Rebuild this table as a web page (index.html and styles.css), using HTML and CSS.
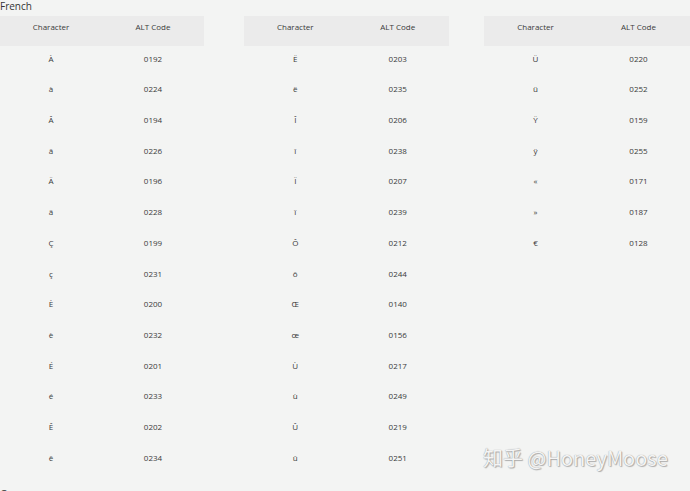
FILE: index.html
```html
<!DOCTYPE html>
<html lang="fr">
<head>
<meta charset="utf-8">
<link rel="stylesheet" href="styles.css">
</head>
<body>
<h3 class="section-title">French</h3>
<div class="tables">
  <div class="alt-table t1">
    <div class="head">Character</div><div class="head">ALT Code</div>
    <div>À</div><div>0192</div>
    <div>à</div><div>0224</div>
    <div>Â</div><div>0194</div>
    <div>â</div><div>0226</div>
    <div>Ä</div><div>0196</div>
    <div>ä</div><div>0228</div>
    <div>Ç</div><div>0199</div>
    <div>ç</div><div>0231</div>
    <div>È</div><div>0200</div>
    <div>è</div><div>0232</div>
    <div>É</div><div>0201</div>
    <div>é</div><div>0233</div>
    <div>Ê</div><div>0202</div>
    <div>ê</div><div>0234</div>
  </div>
  <div class="alt-table t2">
    <div class="head">Character</div><div class="head">ALT Code</div>
    <div>Ë</div><div>0203</div>
    <div>ë</div><div>0235</div>
    <div>Î</div><div>0206</div>
    <div>î</div><div>0238</div>
    <div>Ï</div><div>0207</div>
    <div>ï</div><div>0239</div>
    <div>Ô</div><div>0212</div>
    <div>ô</div><div>0244</div>
    <div>Œ</div><div>0140</div>
    <div>œ</div><div>0156</div>
    <div>Ù</div><div>0217</div>
    <div>ù</div><div>0249</div>
    <div>Û</div><div>0219</div>
    <div>û</div><div>0251</div>
  </div>
  <div class="alt-table t3">
    <div class="head">Character</div><div class="head">ALT Code</div>
    <div>Ü</div><div>0220</div>
    <div>ü</div><div>0252</div>
    <div>Ÿ</div><div>0159</div>
    <div>ÿ</div><div>0255</div>
    <div>«</div><div>0171</div>
    <div>»</div><div>0187</div>
    <div>€</div><div>0128</div>
  </div>
</div>
<h3 class="section-title next">German</h3>
<div class="watermark">知乎 @HoneyMoose</div>
</body>
</html>
```
FILE: styles.css
```css
html, body {
  margin: 0;
  padding: 0;
  background: #f3f4f3;
  overflow: hidden;
  height: 491px;
}
body {
  font-family: "Open Sans", "Liberation Sans", sans-serif;
  color: #3a3a3a;
  position: relative;
}
.section-title {
  margin: 0;
  font-size: 10px;
  font-weight: 400;
  line-height: 12px;
  height: 16px;
  color: #333;
}
.section-title.next {
  margin-top: 12px;
}
.tables {
  display: flex;
  align-items: flex-start;
}
.alt-table {
  display: grid;
  grid-template-columns: 1fr 1fr;
  grid-auto-rows: 30.7px;
  font-size: 8px;
}
.t1 { width: 204px; }
.t2 { width: 205px; margin-left: 40px; }
.t3 { width: 206px; margin-left: 35px; }
.alt-table > div {
  text-align: center;
  line-height: 23px;
}
.alt-table > .head {
  background: #ebebeb;
  height: 30px;
  line-height: 22px;
}
.watermark {
  position: absolute;
  left: 483px;
  top: 444px;
  font-family: "Noto Sans CJK SC", "Liberation Sans", sans-serif;
  font-size: 20px;
  line-height: 28px;
  color: #f4f4f4;
  text-shadow: 0 0 1px #8a8a8a, 1px 1px 1px #b0b0b0;
  white-space: nowrap;
}
```
